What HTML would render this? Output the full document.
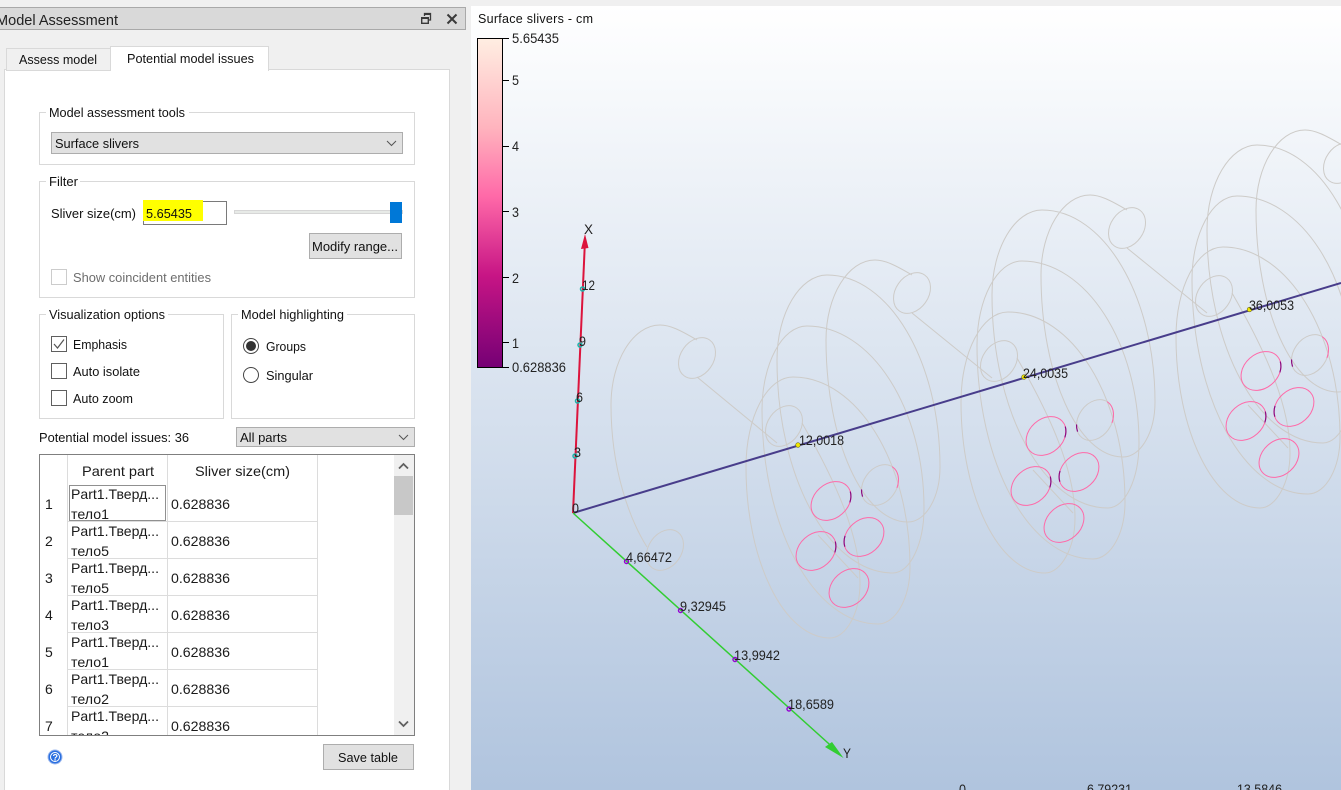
<!DOCTYPE html>
<html><head><meta charset="utf-8"><style>
html,body{margin:0;padding:0;background:#f0f0f0;overflow:hidden}
svg{display:block}
text{font-family:"Liberation Sans","Noto Sans CJK SC",sans-serif;font-size:12.5px;fill:#111}
.t{font-size:14px;fill:#1a1a1a}
.v{font-size:14px;fill:#222}
.g{fill:none;stroke:#cdcbc8;stroke-width:1}
.p{fill:none;stroke:#ff69a8;stroke-width:1}
.d{fill:none;stroke:#8b0a80;stroke-width:1.2}
.b{fill:none;stroke:#d9d9d9;stroke-width:1}
.c{fill:#e1e1e1;stroke:#adadad;stroke-width:1}
.k{fill:#fff;stroke:#5f5f5f;stroke-width:1}
.l{stroke:#dcdcdc;stroke-width:1}
</style></head><body>
<svg width="1341" height="790" viewBox="0 0 1341 790" xmlns="http://www.w3.org/2000/svg">
<defs>
<linearGradient id="bg" x1="0" y1="0" x2="0" y2="1"><stop offset="0" stop-color="#ffffff"/><stop offset="1" stop-color="#b0c4de"/></linearGradient>
<linearGradient id="lg" x1="0" y1="0" x2="0" y2="1"><stop offset="0" stop-color="#ffeee2"/><stop offset=".27" stop-color="#ffb4be"/><stop offset=".48" stop-color="#ff69a8"/><stop offset=".72" stop-color="#c71585"/><stop offset="1" stop-color="#750075"/></linearGradient>
<clipPath id="tb"><rect x="40" y="455" width="374" height="280"/></clipPath>
<g id="u">
<path class="g" d="M912 275C895 265 885 260 875 260C848 260 826 296 826 340C826 440 863 522 908 522C926 522 940 497 940 467C940 361 889 275 827 275C800 275 777 313 777 360C777 477 829 573 893 573C910 573 924 544 924 508C924 408 871 326 807 326C782 326 762 364 762 410C762 528 814 624 878 624C896 624 910 598 910 567C910 462 857 377 793 377C767 377 746 417 746 467C746 561 784 638 830 638C846 638 860 613 860 583C860 535 835 480 802 423"/>
<ellipse class="g" cx="784" cy="426" rx="22" ry="16.500" transform="rotate(-55 784 426)"/>
<ellipse class="g" cx="912" cy="293" rx="22" ry="16.500" transform="rotate(-55 912 293)"/>
<ellipse class="g" cx="880" cy="485" rx="22" ry="16.500" transform="rotate(-55 880 485)"/>
<path class="g" d="M912 313L992 378M818 535L858 578"/>
<ellipse class="p" cx="831" cy="501" rx="22" ry="17" transform="rotate(-42 831 501)"/>
<ellipse class="d" cx="831" cy="501" rx="22" ry="17" transform="rotate(-42 831 501)" pathLength="100" stroke-dasharray="0 5 9 86"/>
<ellipse class="p" cx="864" cy="537" rx="22" ry="17" transform="rotate(-42 864 537)"/>
<ellipse class="d" cx="864" cy="537" rx="22" ry="17" transform="rotate(-42 864 537)" pathLength="100" stroke-dasharray="0 55 9 36"/>
<ellipse class="p" cx="816" cy="551" rx="22" ry="17" transform="rotate(-42 816 551)"/>
<ellipse class="d" cx="816" cy="551" rx="22" ry="17" transform="rotate(-42 816 551)" pathLength="100" stroke-dasharray="0 5 9 86"/>
<ellipse class="p" cx="849" cy="588" rx="22" ry="17" transform="rotate(-42 849 588)"/>
<ellipse class="p" cx="880" cy="485" rx="22" ry="16.500" transform="rotate(-55 880 485)" pathLength="100" stroke-dasharray="0 0 19 81"/>
<ellipse class="d" cx="880" cy="485" rx="22" ry="16.500" transform="rotate(-55 880 485)" pathLength="100" stroke-dasharray="0 57 6 37"/>
</g>
</defs>

<rect x="0" y="0" width="1341" height="790" fill="#f0f0f0"/>

<!-- 3D viewport -->
<rect x="471" y="6" width="870" height="784" fill="url(#bg)"/>
<path class="g" d="M697 340C680 330 670 325 660 325C633 325 611 361 611 405C611 470 630 520 647 547"/>
<ellipse class="g" cx="697" cy="358" rx="22" ry="16.500" transform="rotate(-55 697 358)"/>
<ellipse class="g" cx="665" cy="550" rx="22" ry="16.500" transform="rotate(-55 665 550)"/>
<path class="g" d="M697 377L777 443"/>
<use href="#u"/>
<use href="#u" transform="translate(215 -65)"/>
<use href="#u" transform="translate(430 -130)"/>

<!-- axes -->
<line x1="573" y1="513" x2="1341" y2="283" stroke="#483d8b" stroke-width="2"/>
<line x1="573" y1="513" x2="585" y2="240" stroke="#dc143c" stroke-width="2"/>
<polygon points="585,234 581,249 588.500,248" fill="#dc143c"/>
<line x1="573" y1="513" x2="838" y2="752" stroke="#32cd32" stroke-width="1.500"/>
<polygon points="843.500,758 825,747 832,742" fill="#32cd32"/>
<g fill="none" stroke="#20b2aa" stroke-width="1.500"><circle cx="582.500" cy="289" r="2"/><circle cx="580" cy="345" r="2"/><circle cx="577.500" cy="401" r="2"/><circle cx="575" cy="456" r="2"/></g>
<g fill="#f2e600" stroke="#6b6b20" stroke-width=".6"><circle cx="798" cy="445" r="2.300"/><circle cx="1024" cy="377" r="2.300"/><circle cx="1249.500" cy="309.500" r="2.300"/></g>
<g fill="none" stroke="#9400d3" stroke-width="1.400"><circle cx="626.500" cy="561.500" r="2"/><circle cx="680.500" cy="610.500" r="2"/><circle cx="735" cy="659.500" r="2"/><circle cx="789" cy="709" r="2"/></g>

<text class="v" x="584" y="234" textLength="9" lengthAdjust="spacingAndGlyphs">X</text>
<text class="v" x="582" y="290" textLength="13" lengthAdjust="spacingAndGlyphs">12</text>
<text class="v" x="579" y="346" textLength="7" lengthAdjust="spacingAndGlyphs">9</text>
<text class="v" x="576" y="402" textLength="7" lengthAdjust="spacingAndGlyphs">6</text>
<text class="v" x="574" y="457" textLength="7" lengthAdjust="spacingAndGlyphs">3</text>
<text class="v" x="572" y="513" textLength="7" lengthAdjust="spacingAndGlyphs">0</text>
<text class="v" x="626" y="562" textLength="46" lengthAdjust="spacingAndGlyphs">4,66472</text>
<text class="v" x="680" y="611" textLength="46" lengthAdjust="spacingAndGlyphs">9,32945</text>
<text class="v" x="734" y="660" textLength="46" lengthAdjust="spacingAndGlyphs">13,9942</text>
<text class="v" x="788" y="709" textLength="46" lengthAdjust="spacingAndGlyphs">18,6589</text>
<text class="v" x="799" y="445" textLength="45" lengthAdjust="spacingAndGlyphs">12,0018</text>
<text class="v" x="1023" y="378" textLength="45" lengthAdjust="spacingAndGlyphs">24,0035</text>
<text class="v" x="1249" y="310" textLength="45" lengthAdjust="spacingAndGlyphs">36,0053</text>
<text class="v" x="843" y="758" textLength="8" lengthAdjust="spacingAndGlyphs">Y</text>
<text class="v" x="959" y="794" textLength="7" lengthAdjust="spacingAndGlyphs">0</text>
<text class="v" x="1087" y="794" textLength="45" lengthAdjust="spacingAndGlyphs">6,79231</text>
<text class="v" x="1237" y="794" textLength="45" lengthAdjust="spacingAndGlyphs">13,5846</text>

<!-- legend -->
<text x="478" y="23" textLength="115" lengthAdjust="spacing">Surface slivers - cm</text>
<rect x="477.500" y="38.500" width="25" height="329" fill="url(#lg)" stroke="#000"/>
<path d="M503 38.500H509M503 80.500H509M503 146.500H509M503 211.500H509M503 277.500H509M503 342.500H509M503 367.500H509" stroke="#000" stroke-width="1"/>
<text class="v" x="512" y="43" textLength="47" lengthAdjust="spacingAndGlyphs">5.65435</text>
<text class="v" x="512" y="85" textLength="7" lengthAdjust="spacingAndGlyphs">5</text>
<text class="v" x="512" y="151" textLength="7" lengthAdjust="spacingAndGlyphs">4</text>
<text class="v" x="512" y="217" textLength="7" lengthAdjust="spacingAndGlyphs">3</text>
<text class="v" x="512" y="283" textLength="7" lengthAdjust="spacingAndGlyphs">2</text>
<text class="v" x="512" y="348" textLength="7" lengthAdjust="spacingAndGlyphs">1</text>
<text class="v" x="512" y="372" textLength="54" lengthAdjust="spacingAndGlyphs">0.628836</text>

<!-- title bar -->
<rect x="-2" y="7.500" width="467.500" height="22" fill="#d9d9d9" stroke="#a9a9a9"/>
<text x="-4" y="25" style="font-size:14.5px;fill:#222" textLength="122" lengthAdjust="spacingAndGlyphs">Model Assessment</text>
<path d="M424.500 16V13.500H430.500V20H428.500" fill="none" stroke="#3a3a3a" stroke-width="1.300"/>
<rect x="424" y="13" width="7" height="2" fill="#3a3a3a"/>
<rect x="421.700" y="17.700" width="6.600" height="5.600" fill="none" stroke="#3a3a3a" stroke-width="1.400"/>
<rect x="421" y="17" width="8" height="2" fill="#3a3a3a"/>
<path d="M447.500 14.500L456.500 23.500M456.500 14.500L447.500 23.500" stroke="#3a3a3a" stroke-width="2"/>

<!-- tabs and panel -->
<rect x="4.500" y="69.500" width="445" height="730" fill="#fff" stroke="#d9d9d9"/>
<rect x="6.500" y="48.500" width="104" height="22" fill="#f0f0f0" stroke="#d9d9d9"/>
<rect x="110.500" y="46.500" width="158" height="24" fill="#fff" stroke="#d9d9d9"/>
<rect x="111" y="68" width="157" height="3" fill="#fff"/>
<text x="19" y="64" textLength="78" lengthAdjust="spacingAndGlyphs">Assess model</text>
<text x="127" y="63" textLength="127" lengthAdjust="spacingAndGlyphs">Potential model issues</text>

<!-- Model assessment tools -->
<rect class="b" x="39.500" y="112.500" width="375" height="52"/>
<rect x="46" y="108" width="143" height="9" fill="#fff"/>
<text x="49" y="117" textLength="136" lengthAdjust="spacingAndGlyphs">Model assessment tools</text>
<rect class="c" x="51.500" y="132.500" width="351" height="21"/>
<text x="55" y="148" textLength="84" lengthAdjust="spacingAndGlyphs">Surface slivers</text>
<path d="M387 141L391.500 145.500L396 141" fill="none" stroke="#555"/>

<!-- Filter -->
<rect class="b" x="39.500" y="181.500" width="375" height="116"/>
<rect x="46" y="177" width="34" height="9" fill="#fff"/>
<text x="49" y="186" textLength="29" lengthAdjust="spacingAndGlyphs">Filter</text>
<text x="51" y="218" textLength="85" lengthAdjust="spacingAndGlyphs">Sliver size(cm)</text>
<rect x="143.500" y="201.500" width="83" height="23" fill="#fff" stroke="#7a7a7a"/>
<rect x="143" y="200" width="60" height="21" fill="#ffff00"/>
<text x="146" y="218" textLength="46" lengthAdjust="spacingAndGlyphs">5.65435</text>
<rect x="234.500" y="210.500" width="168" height="3" fill="#e7eae7" stroke="#d6d6d6"/>
<rect x="390" y="202" width="12" height="21" fill="#0078d7"/>
<rect class="c" x="309.500" y="233.500" width="92" height="25"/>
<text x="312" y="251" textLength="86" lengthAdjust="spacingAndGlyphs">Modify range...</text>
<rect x="51.500" y="269.500" width="15" height="15" fill="#fff" stroke="#cccccc"/>
<text x="73" y="282" textLength="138" lengthAdjust="spacingAndGlyphs" style="fill:#6d6d6d">Show coincident entities</text>

<!-- Visualization options -->
<rect class="b" x="39.500" y="314.500" width="184" height="104"/>
<rect x="46" y="310" width="122" height="9" fill="#fff"/>
<text x="49" y="319" textLength="116" lengthAdjust="spacingAndGlyphs">Visualization options</text>
<rect class="k" x="51.500" y="336.500" width="15" height="15"/>
<path d="M54 344L57.500 348L64 339.500" fill="none" stroke="#555" stroke-width="1.200"/>
<text x="73" y="349" textLength="54" lengthAdjust="spacingAndGlyphs">Emphasis</text>
<rect class="k" x="51.500" y="363.500" width="15" height="15"/>
<text x="73" y="376" textLength="67" lengthAdjust="spacingAndGlyphs">Auto isolate</text>
<rect class="k" x="51.500" y="390.500" width="15" height="15"/>
<text x="73" y="403" textLength="60" lengthAdjust="spacingAndGlyphs">Auto zoom</text>

<!-- Model highlighting -->
<rect class="b" x="231.500" y="314.500" width="183" height="104"/>
<rect x="238" y="310" width="109" height="9" fill="#fff"/>
<text x="241" y="319" textLength="103" lengthAdjust="spacingAndGlyphs">Model highlighting</text>
<circle cx="251" cy="346" r="7.500" fill="#fff" stroke="#444"/>
<circle cx="251" cy="346" r="5" fill="#333"/>
<text x="266" y="351" textLength="40" lengthAdjust="spacingAndGlyphs">Groups</text>
<circle cx="251" cy="375" r="7.500" fill="#fff" stroke="#444"/>
<text x="266" y="380" textLength="47" lengthAdjust="spacingAndGlyphs">Singular</text>

<!-- issues -->
<text x="39" y="442" textLength="150" lengthAdjust="spacingAndGlyphs">Potential model issues: 36</text>
<rect class="c" x="236.500" y="427.500" width="178" height="19"/>
<text x="240" y="442" textLength="47" lengthAdjust="spacingAndGlyphs">All parts</text>
<path d="M399 435L403.500 439.500L408 435" fill="none" stroke="#555"/>

<!-- table -->
<g clip-path="url(#tb)">
<rect x="40" y="455" width="374" height="280" fill="#fff"/>
<path d="M67.500 455V735M167.500 455V735M317.500 455V735" class="l" fill="none"/>
<path d="M67 521.500H318M67 558.500H318M67 595.500H318M67 632.500H318M67 669.500H318M67 706.500H318" class="l" fill="none"/>
<text class="t" x="82" y="476" textLength="72" lengthAdjust="spacingAndGlyphs">Parent part</text>
<text class="t" x="195" y="476" textLength="95" lengthAdjust="spacingAndGlyphs">Sliver size(cm)</text>

<text class="t" x="45" y="509">1</text>
<text class="t" x="71" y="499" textLength="88" lengthAdjust="spacingAndGlyphs">Part1.Тверд...</text>
<text class="t" x="71" y="519" textLength="38" lengthAdjust="spacingAndGlyphs">тело1</text>
<text class="t" x="171" y="509" textLength="59" lengthAdjust="spacingAndGlyphs">0.628836</text>

<text class="t" x="45" y="546">2</text>
<text class="t" x="71" y="536" textLength="88" lengthAdjust="spacingAndGlyphs">Part1.Тверд...</text>
<text class="t" x="71" y="556" textLength="38" lengthAdjust="spacingAndGlyphs">тело5</text>
<text class="t" x="171" y="546" textLength="59" lengthAdjust="spacingAndGlyphs">0.628836</text>

<text class="t" x="45" y="583">3</text>
<text class="t" x="71" y="573" textLength="88" lengthAdjust="spacingAndGlyphs">Part1.Тверд...</text>
<text class="t" x="71" y="593" textLength="38" lengthAdjust="spacingAndGlyphs">тело5</text>
<text class="t" x="171" y="583" textLength="59" lengthAdjust="spacingAndGlyphs">0.628836</text>

<text class="t" x="45" y="620">4</text>
<text class="t" x="71" y="610" textLength="88" lengthAdjust="spacingAndGlyphs">Part1.Тверд...</text>
<text class="t" x="71" y="630" textLength="38" lengthAdjust="spacingAndGlyphs">тело3</text>
<text class="t" x="171" y="620" textLength="59" lengthAdjust="spacingAndGlyphs">0.628836</text>

<text class="t" x="45" y="657">5</text>
<text class="t" x="71" y="647" textLength="88" lengthAdjust="spacingAndGlyphs">Part1.Тверд...</text>
<text class="t" x="71" y="667" textLength="38" lengthAdjust="spacingAndGlyphs">тело1</text>
<text class="t" x="171" y="657" textLength="59" lengthAdjust="spacingAndGlyphs">0.628836</text>

<text class="t" x="45" y="694">6</text>
<text class="t" x="71" y="684" textLength="88" lengthAdjust="spacingAndGlyphs">Part1.Тверд...</text>
<text class="t" x="71" y="704" textLength="38" lengthAdjust="spacingAndGlyphs">тело2</text>
<text class="t" x="171" y="694" textLength="59" lengthAdjust="spacingAndGlyphs">0.628836</text>

<text class="t" x="45" y="731">7</text>
<text class="t" x="71" y="721" textLength="88" lengthAdjust="spacingAndGlyphs">Part1.Тверд...</text>
<text class="t" x="71" y="741" textLength="38" lengthAdjust="spacingAndGlyphs">тело2</text>
<text class="t" x="171" y="731" textLength="59" lengthAdjust="spacingAndGlyphs">0.628836</text>

<rect x="69.500" y="485.500" width="96" height="35" fill="none" stroke="#222" stroke-width="1" stroke-dasharray="1 1" shape-rendering="crispEdges"/>
<rect x="394" y="455" width="20" height="280" fill="#f0f0f0"/>
<rect x="394" y="476" width="19" height="39" fill="#c8c8c8"/>
<path d="M399 468.500L403.500 464L408 468.500M399 721.500L403.500 726L408 721.500" fill="none" stroke="#606060" stroke-width="1.800"/>
</g>
<rect x="39.500" y="454.500" width="375" height="281" fill="none" stroke="#7f7f7f"/>

<!-- footer -->
<circle cx="55" cy="757" r="7" fill="#2a6fe0" stroke="#9db9ee" stroke-width="1"/>
<circle cx="55" cy="757" r="4.500" fill="none" stroke="#ffffff" stroke-width="1"/>
<text x="52.500" y="760.500" style="font-size:9px;font-weight:bold;fill:#fff">?</text>
<rect class="c" x="323.500" y="744.500" width="90" height="25"/>
<text x="338" y="762" textLength="60" lengthAdjust="spacingAndGlyphs">Save table</text>
</svg>
</body></html>
